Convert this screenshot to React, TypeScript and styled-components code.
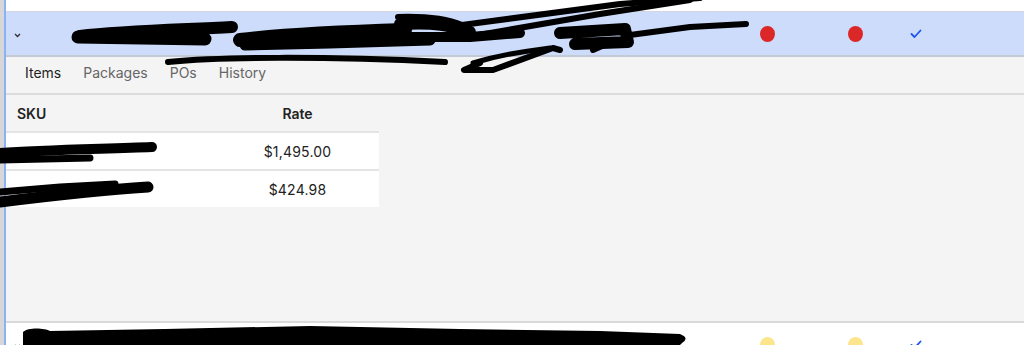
import React from "react";
import styled, { createGlobalStyle } from "styled-components";

const GlobalStyle = createGlobalStyle`
  html, body { margin: 0; padding: 0; }
  body {
    font-family: Inter, "Noto Sans", Arial, sans-serif;
    background: #f4f4f4;
    width: 1024px;
    height: 345px;
    overflow: hidden;
  }
`;

const Page = styled.div`
  position: relative;
  display: flex;
  width: 1024px;
  height: 345px;
  overflow: hidden;
`;

const Gutter = styled.div`
  width: 4px;
  background: #d7d7d7;
  flex: none;
`;

const Accent = styled.div`
  width: 2px;
  background: #8db2f4;
  flex: none;
`;

const Main = styled.div`
  flex: 1;
  display: flex;
  flex-direction: column;
  min-width: 0;
`;

const TopGap = styled.div`
  height: 11px;
  background: #ffffff;
  border-bottom: 1px solid #d2d7df;
  flex: none;
`;

const OrderRow = styled.div<{ $expanded?: boolean }>`
  display: grid;
  grid-template-columns: 22px 1fr 88px 88px 34px 91px;
  align-items: center;
  height: ${(p) => (p.$expanded ? "43px" : "44px")};
  background: ${(p) => (p.$expanded ? "#cddcfb" : "#ffffff")};
  border-bottom: ${(p) => (p.$expanded ? "2px solid #c3cad6" : "none")};
  flex: none;
`;

const Chevron = styled.span`
  display: flex;
  justify-content: flex-start;
  padding-left: 8px;
  padding-top: 3px;
  color: #333;
`;

const Cell = styled.span`
  display: flex;
  justify-content: center;
  align-items: center;
`;

const Dot = styled.span<{ $color: string }>`
  width: 15px;
  height: 16px;
  border-radius: 50%;
  background: ${(p) => p.$color};
`;

const TabBar = styled.div`
  display: flex;
  align-items: center;
  height: 38px;
  padding: 0 0 5px 8px;
  box-sizing: border-box;
  background: #f4f4f4;
  border-bottom: 2px solid #dcdcdc;
  flex: none;
`;

const Tab = styled.span<{ $active?: boolean }>`
  padding: 0 11px;
  font-size: 14px;
  color: ${(p) => (p.$active ? "#1f1f1f" : "#666666")};
`;

const Content = styled.div`
  height: 226px;
  background: #f4f4f4;
  border-bottom: 2px solid #dadada;
  flex: none;
`;

const Table = styled.div`
  width: 373px;
  display: flex;
  flex-direction: column;
`;

const TRow = styled.div<{ $head?: boolean }>`
  display: grid;
  grid-template-columns: 214px 1fr;
  align-items: center;
  height: 36px;
  background: ${(p) => (p.$head ? "transparent" : "#ffffff")};
  border-top: ${(p) => (p.$head ? "none" : "2px solid #e4e4e4")};
  font-size: 14px;
  color: #222;
`;

const SkuCell = styled.span<{ $head?: boolean }>`
  padding-left: 11px;
  font-weight: ${(p) => (p.$head ? 600 : 400)};
`;

const RateCell = styled.span<{ $head?: boolean }>`
  text-align: center;
  font-weight: ${(p) => (p.$head ? 600 : 400)};
  letter-spacing: ${(p) => (p.$head ? "0" : "0.2px")};
  padding-right: 4px;
`;

const Scribbles = styled.svg`
  position: absolute;
  left: 0;
  top: 0;
  pointer-events: none;
`;

const ChevronIcon = () => (
  <svg width="7" height="5" viewBox="0 0 7 5">
    <polyline points="1,1 3.5,3.5 6,1" fill="none" stroke="#333" strokeWidth="1.4" />
  </svg>
);

const Check = () => (
  <svg width="12" height="10" viewBox="0 0 12 10">
    <polyline
      points="1.5,5 4.5,8 10.5,1.5"
      fill="none"
      stroke="#1d55f2"
      strokeWidth="1.8"
      strokeLinecap="round"
      strokeLinejoin="round"
    />
  </svg>
);

export default function App() {
  return (
    <>
      <GlobalStyle />
      <Page>
        <Gutter />
        <Accent />
        <Main>
          <TopGap />
          <OrderRow $expanded>
            <Chevron>
              <ChevronIcon />
            </Chevron>
            <span />
            <Cell>
              <Dot $color="#db2727" />
            </Cell>
            <Cell>
              <Dot $color="#db2727" />
            </Cell>
            <Cell>
              <Check />
            </Cell>
            <span />
          </OrderRow>
          <TabBar>
            <Tab $active>Items</Tab>
            <Tab>Packages</Tab>
            <Tab>POs</Tab>
            <Tab>History</Tab>
          </TabBar>
          <Content>
            <Table>
              <TRow $head>
                <SkuCell $head>SKU</SkuCell>
                <RateCell $head>Rate</RateCell>
              </TRow>
              <TRow>
                <SkuCell />
                <RateCell>$1,495.00</RateCell>
              </TRow>
              <TRow>
                <SkuCell />
                <RateCell>$424.98</RateCell>
              </TRow>
            </Table>
          </Content>
          <OrderRow>
            <Chevron>
              <ChevronIcon />
            </Chevron>
            <span />
            <Cell>
              <Dot $color="#fde58c" />
            </Cell>
            <Cell>
              <Dot $color="#fde58c" />
            </Cell>
            <Cell>
              <Check />
            </Cell>
            <span />
          </OrderRow>
        </Main>
        <Scribbles width="1024" height="345" viewBox="0 0 1024 345">
          <g fill="none" stroke="#000" strokeLinecap="round" strokeLinejoin="round">
            <path d="M80 36 C 120 31, 170 30, 232 27" strokeWidth="12" />
            <path d="M78 37 L 205 39" strokeWidth="13" />
            <path d="M240 40 C 290 34, 340 32, 405 30" strokeWidth="14" />
            <path d="M245 45 L 330 43 L 430 40" strokeWidth="11" />
            <path d="M400 24 C 440 22, 450 26, 470 32" strokeWidth="12" />
            <path d="M398 17 C 430 16, 450 20, 462 25 L 620 4 L 700 -2" strokeWidth="6" />
            <path d="M467 37 L 600 14 L 690 0" strokeWidth="6" />
            <path d="M395 37 L 470 37 L 520 33" strokeWidth="10" />
            <path d="M560 33 L 625 29 L 628 42 L 575 44" strokeWidth="12" />
            <path d="M630 35 L 690 27 L 746 24" strokeWidth="6" />
            <path d="M168 62 C 220 57, 320 56, 445 62" strokeWidth="6" />
            <path d="M480 63 L 464 70 L 493 70 L 553 48 L 560 50" strokeWidth="6" />
            <path d="M473 63 C 500 55, 520 52, 550 48" strokeWidth="5" />
            <path d="M593 50 L 602 46" strokeWidth="6" />
            <path d="M0 153 C 40 150, 100 149, 152 147" strokeWidth="10" />
            <path d="M0 160 L 90 158" strokeWidth="7" />
            <path d="M0 202 C 40 197, 100 190, 148 187" strokeWidth="11" />
            <path d="M0 192 L 60 187 L 115 184" strokeWidth="7" />
          </g>
          <path
            d="M23 332 C 28 327, 45 328, 50 331 L 165 329 L 310 326 L 460 329 L 600 331 L 680 334 Q 690 338 682 343 L 680 345 L 23 345 Z"
            fill="#000"
          />
        </Scribbles>
      </Page>
    </>
  );
}
